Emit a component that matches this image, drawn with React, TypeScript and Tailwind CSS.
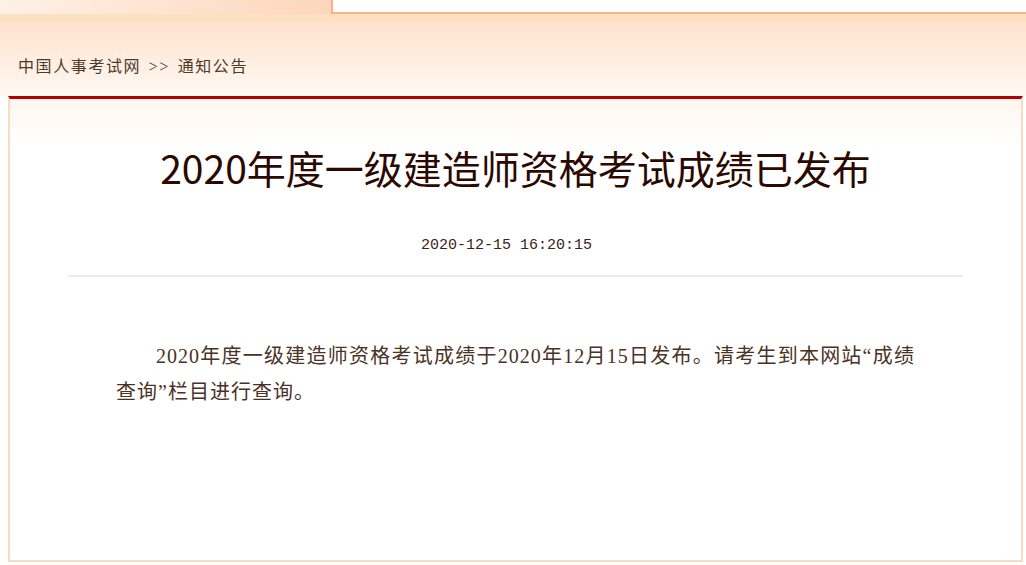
export default function App() {
  return (
    <div className="w-[1026px] h-[565px] overflow-hidden bg-white font-['Liberation_Serif','Noto_Sans_CJK_SC',serif]">
      {/* top strip */}
      <div className="flex h-[14px]">
        <div className="w-[331px] bg-linear-to-r from-[#fff1e6] to-[#fdd6bc]" />
        <div className="flex-1 bg-white border-l-2 border-b-2 border-[#ffb088]" />
      </div>
      <div className="h-[7px] bg-[#fde0bd]" />

      {/* header with breadcrumb */}
      <div className="h-[75px] bg-linear-to-b from-[#ffe2cc] to-[#fff8f3] flex items-center pl-[18px] pt-[16px]">
        <div className="text-[16px] tracking-[1.6px] text-[#4e3a2c]">
          中国人事考试网 <span className="mx-[2px]">&gt;&gt;</span> 通知公告
        </div>
      </div>

      {/* article box */}
      <div className="mx-[8px] w-[1015px] h-[466px] border-2 border-[#f6dcc0] border-t-[3px] border-t-[#b40000] bg-linear-to-b from-[#fff6ef] to-white to-[10%]">
        <h1 className="pt-[43px] text-center text-[39px] leading-[50px] font-normal text-[#2b0800] font-['Noto_Sans_CJK_SC',sans-serif]">
          2020年度一级建造师资格考试成绩已发布
        </h1>
        <div className="mt-[44px] text-center pr-[18px] text-[15px] leading-[20px] text-[#3a2418] font-['Liberation_Mono','Noto_Sans_CJK_SC',monospace]">
          2020-12-15 16:20:15
        </div>
        <div className="mx-[58px] mt-[19px] h-[2px] bg-[#e8ecf0]" />
        <p className="mt-[61px] px-[106px] text-[20px] leading-[36px] tracking-[1px] indent-[2em] text-justify text-[#4a3224]">
          2020年度一级建造师资格考试成绩于2020年12月15日发布。请考生到本网站“成绩查询”栏目进行查询。
        </p>
      </div>
    </div>
  );
}
